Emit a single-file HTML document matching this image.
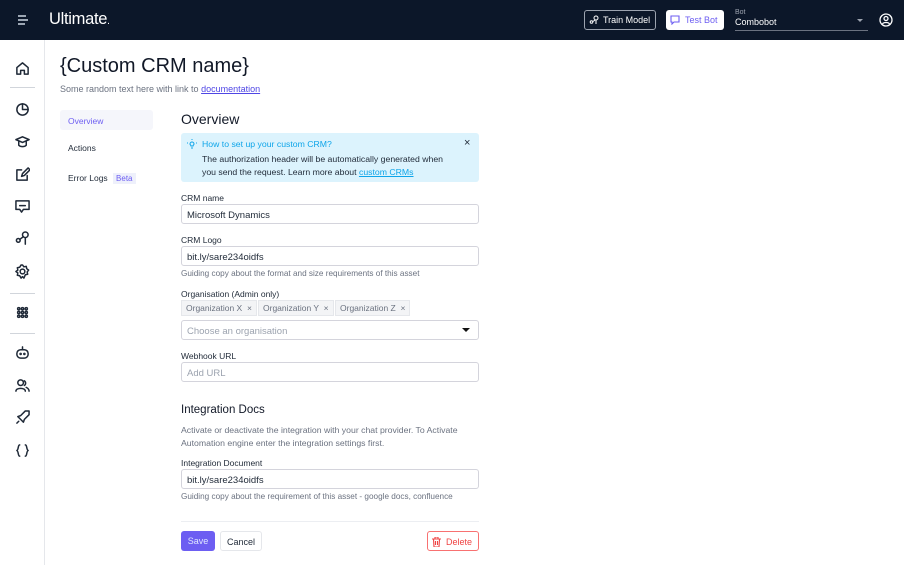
<!DOCTYPE html>
<html><head><meta charset="utf-8"><style>
*{box-sizing:border-box;margin:0;padding:0}
body{width:904px;height:565px;overflow:hidden;background:#fff;font-family:"Liberation Sans",sans-serif;color:#1f2937;position:relative}
.hdr{position:absolute;left:0;top:0;width:904px;height:40px;background:#0c1729}
.abs{position:absolute}
.side{position:absolute;left:0;top:40px;width:45px;height:525px;border-right:1px solid #e5e7eb}
.side svg{position:absolute;left:15px;width:15px;height:15px;fill:none;stroke:#1f2937;stroke-width:1.6;stroke-linecap:round;stroke-linejoin:round}
.sep{position:absolute;left:10px;width:25px;border-top:1px solid #d1d5db}
.lbl{position:absolute;left:181px;font-size:8.5px;color:#1f2937}
.inp{position:absolute;left:181px;width:298px;height:20px;border:1px solid #d4d4dc;border-radius:3px;font-size:9.5px;padding:5px 5px;color:#1f2937;background:#fff}
.hint{position:absolute;left:181px;font-size:8.2px;color:#6b7280}
.tag{position:absolute;top:300px;height:16px;background:#f3f4f6;border:1px solid #e5e7eb;font-size:8.5px;color:#6b7280;padding:2px 4px}
</style></head><body>
<div class="hdr">
 <svg class="abs" style="left:17px;top:14px" width="12" height="12" viewBox="0 0 12 12"><path d="M1 2h8M1 6h10M1 10h7" stroke="#cbd5e1" stroke-width="1.4"/></svg>
 <div class="abs" style="left:49px;top:10px;color:#fff;font-size:16.5px;letter-spacing:-0.3px">Ultimate<span style="font-size:10px">.</span></div>
 <div class="abs" style="left:584px;top:10px;width:72px;height:20px;border:1px solid #9ca3af;border-radius:3px;color:#fff;font-size:9px;padding:4px 0 0 18px">Train Model
  <svg class="abs" style="left:4px;top:4px" width="10" height="10" viewBox="0 0 10 10" fill="none" stroke="#fff" stroke-width="1"><circle cx="7" cy="3" r="2"/><circle cx="2.5" cy="7" r="1.3"/><path d="M6 5L4 6.5M7 5v4"/></svg></div>
 <div class="abs" style="left:666px;top:10px;width:58px;height:20px;background:#fff;border-radius:3px;color:#6d5ef2;font-size:9px;padding:5px 0 0 19px">Test Bot
  <svg class="abs" style="left:4px;top:5px" width="10" height="10" viewBox="0 0 10 10" fill="none" stroke="#6d5ef2" stroke-width="1.1"><path d="M1 1h8v6H4L2 9V7H1z"/></svg></div>
 <div class="abs" style="left:735px;top:9px;color:#9ca3af;font-size:7px">Bot</div>
 <div class="abs" style="left:735px;top:17px;color:#fff;font-size:9px">Combobot</div>
 <div class="abs" style="left:735px;top:30px;width:133px;border-top:1px solid #6b7280"></div>
 <div class="abs" style="left:857px;top:19px;width:0;height:0;border-left:3px solid transparent;border-right:3px solid transparent;border-top:3px solid #9ca3af"></div>
 <svg class="abs" style="left:879px;top:13px" width="14" height="14" viewBox="0 0 14 14" fill="none" stroke="#fff" stroke-width="1.3"><circle cx="7" cy="7" r="6"/><circle cx="7" cy="5.5" r="2"/><path d="M3.5 11c1-2 6-2 7 0"/></svg>
</div>
<div class="side">
 <svg style="top:21px" viewBox="0 0 16 16"><path d="M2 7l6-5 6 5v7H10V10H6v4H2z"/></svg>
 <div class="sep" style="top:47px"></div>
 <svg style="top:61px" viewBox="0 0 16 16"><circle cx="8" cy="9" r="6"/><path d="M8 9V3M8 9h6"/></svg>
 <svg style="top:94px" viewBox="0 0 16 16"><path d="M1 6l7-3 7 3-7 3zM4 8v4c2 2 6 2 8 0V8"/></svg>
 <svg style="top:127px" viewBox="0 0 16 16"><path d="M13 9v5H2V3h5M7 10l1-3 6-6 2 2-6 6z"/></svg>
 <svg style="top:159px" viewBox="0 0 16 16"><path d="M1 2h14v9H9l-2 3-2-3H1zM5 7h6"/></svg>
 <svg style="top:191px" viewBox="0 0 16 16"><circle cx="11" cy="4" r="3"/><circle cx="3.5" cy="10" r="2"/><path d="M9 6l-4 3M11 7v7"/></svg>
 <svg style="top:224px" viewBox="0 0 16 16"><circle cx="8" cy="8" r="2.5"/><path d="M8 1l1.5 2 2.5-.5.5 2.5 2 1.5-1.5 2 .5 2.5-2.5.5L9.5 15 8 13.5 6.5 15 5 12.5l-2.5-.5.5-2.5L1 8l2-1.5L2.5 4 5 3.5 6.5 1z"/></svg>
 <div class="sep" style="top:253px"></div>
 <svg style="top:265px" viewBox="0 0 16 16" fill="#1f2937" stroke="none"><circle cx="4" cy="4" r="1.2"/><circle cx="8" cy="4" r="1.2"/><circle cx="12" cy="4" r="1.2"/><circle cx="4" cy="8" r="1.2"/><circle cx="8" cy="8" r="1.2"/><circle cx="12" cy="8" r="1.2"/><circle cx="4" cy="12" r="1.2"/><circle cx="8" cy="12" r="1.2"/><circle cx="12" cy="12" r="1.2"/></svg>
 <div class="sep" style="top:293px"></div>
 <svg style="top:305px" viewBox="0 0 16 16"><rect x="2" y="5" width="12" height="9" rx="4"/><path d="M8 5V2"/><circle cx="6" cy="9.5" r=".6"/><circle cx="10" cy="9.5" r=".6"/></svg>
 <svg style="top:338px" viewBox="0 0 16 16"><circle cx="6" cy="5" r="3"/><path d="M1 14c0-4 10-4 10 0M10 3a3 3 0 010 5M12 10c2 1 3 2 3 4"/></svg>
 <svg style="top:370px" viewBox="0 0 16 16"><path d="M6 10L3 7l3-1 5-5h4v4l-5 5-1 3zM4 12l-2 2"/></svg>
 <svg style="top:403px" viewBox="0 0 16 16"><path d="M5 2C3 2 4 7 2 8c2 1 1 6 3 6M11 2c2 0 1 5 3 6-2 1-1 6-3 6"/></svg>
</div>
<div class="abs" style="left:60px;top:55px;font-size:20px;color:#111827">{Custom CRM name}</div>
<div class="abs" style="left:60px;top:84px;font-size:9px;color:#6b7280">Some random text here with link to <span style="color:#4f46e5;text-decoration:underline">documentation</span></div>
<div class="abs" style="left:60px;top:110px;width:93px;height:20px;background:#f5f6fb;border-radius:3px;font-size:8.5px;color:#6d5ef2;padding:6px 8px">Overview</div>
<div class="abs" style="left:68px;top:143px;font-size:8.5px">Actions</div>
<div class="abs" style="left:68px;top:173px;font-size:8.5px">Error Logs <span style="background:#eef0fb;color:#6d5ef2;padding:1px 3px;margin-left:3px;font-size:8px">Beta</span></div>
<div class="abs" style="left:181px;top:111px;font-size:14px;color:#111827">Overview</div>
<div class="abs" style="left:181px;top:133px;width:298px;height:49px;background:#dcf3fd;border-radius:3px">
 <svg class="abs" style="left:6px;top:6px" width="10" height="10" viewBox="0 0 10 10" fill="none" stroke="#0ea5e9" stroke-width="1"><path d="M3 5a2 2 0 114 0c0 1-1 1-1 2H4c0-1-1-1-1-2zM4 9h2M5 0v1M0 4h1M9 4h1"/></svg>
 <div class="abs" style="left:21px;top:6px;font-size:8.7px;color:#0ea5e9">How to set up your custom CRM?</div>
 <div class="abs" style="left:21px;top:20px;font-size:8.7px;line-height:13px;color:#1f2937">The authorization header will be automatically generated when<br>you send the request. Learn more about <span style="color:#0ea5e9;text-decoration:underline">custom CRMs</span></div>
 <div class="abs" style="left:283px;top:4px;font-size:11px">×</div>
</div>
<div class="lbl" style="top:193px">CRM name</div>
<div class="inp" style="top:204px">Microsoft Dynamics</div>
<div class="lbl" style="top:235px">CRM Logo</div>
<div class="inp" style="top:246px">bit.ly/sare234oidfs</div>
<div class="hint" style="top:269px">Guiding copy about the format and size requirements of this asset</div>
<div class="lbl" style="top:289px">Organisation (Admin only)</div>
<div class="tag" style="left:181px">Organization X &nbsp;×</div>
<div class="tag" style="left:258px">Organization Y &nbsp;×</div>
<div class="tag" style="left:335px">Organization Z &nbsp;×</div>
<div class="inp" style="top:320px;color:#9ca3af">Choose an organisation</div>
<div class="abs" style="left:462px;top:328px;border-left:4px solid transparent;border-right:4px solid transparent;border-top:4px solid #111"></div>
<div class="lbl" style="top:351px">Webhook URL</div>
<div class="inp" style="top:362px;color:#9ca3af">Add URL</div>
<div class="abs" style="left:181px;top:404px;font-size:11.5px;color:#111827">Integration Docs</div>
<div class="hint" style="top:424px;font-size:8.7px;line-height:13px">Activate or deactivate the integration with your chat provider. To Activate<br>Automation engine enter the integration settings first.</div>
<div class="lbl" style="top:458px">Integration Document</div>
<div class="inp" style="top:469px">bit.ly/sare234oidfs</div>
<div class="hint" style="top:492px">Guiding copy about the requirement of this asset - google docs, confluence</div>
<div class="abs" style="left:181px;top:521px;width:298px;border-top:1px solid #eceef2"></div>
<div class="abs" style="left:181px;top:531px;width:34px;height:20px;background:#6d5ef2;border-radius:3px;color:#e0e7ff;font-size:9px;text-align:center;padding-top:5px">Save</div>
<div class="abs" style="left:220px;top:531px;width:42px;height:20px;border:1px solid #e5e7eb;border-radius:3px;font-size:9px;text-align:center;padding-top:5px">Cancel</div>
<div class="abs" style="left:427px;top:531px;width:52px;height:20px;border:1px solid #f87171;border-radius:3px;color:#ef4444;font-size:9px;padding:5px 0 0 18px">Delete
 <svg class="abs" style="left:4px;top:5px" width="9" height="10" viewBox="0 0 9 10" fill="none" stroke="#ef4444" stroke-width="1.1"><path d="M0 2h9M3 2V0h3v2M1.5 2l.5 8h5l.5-8M3.5 4v4M5.5 4v4"/></svg></div>
</body></html>
